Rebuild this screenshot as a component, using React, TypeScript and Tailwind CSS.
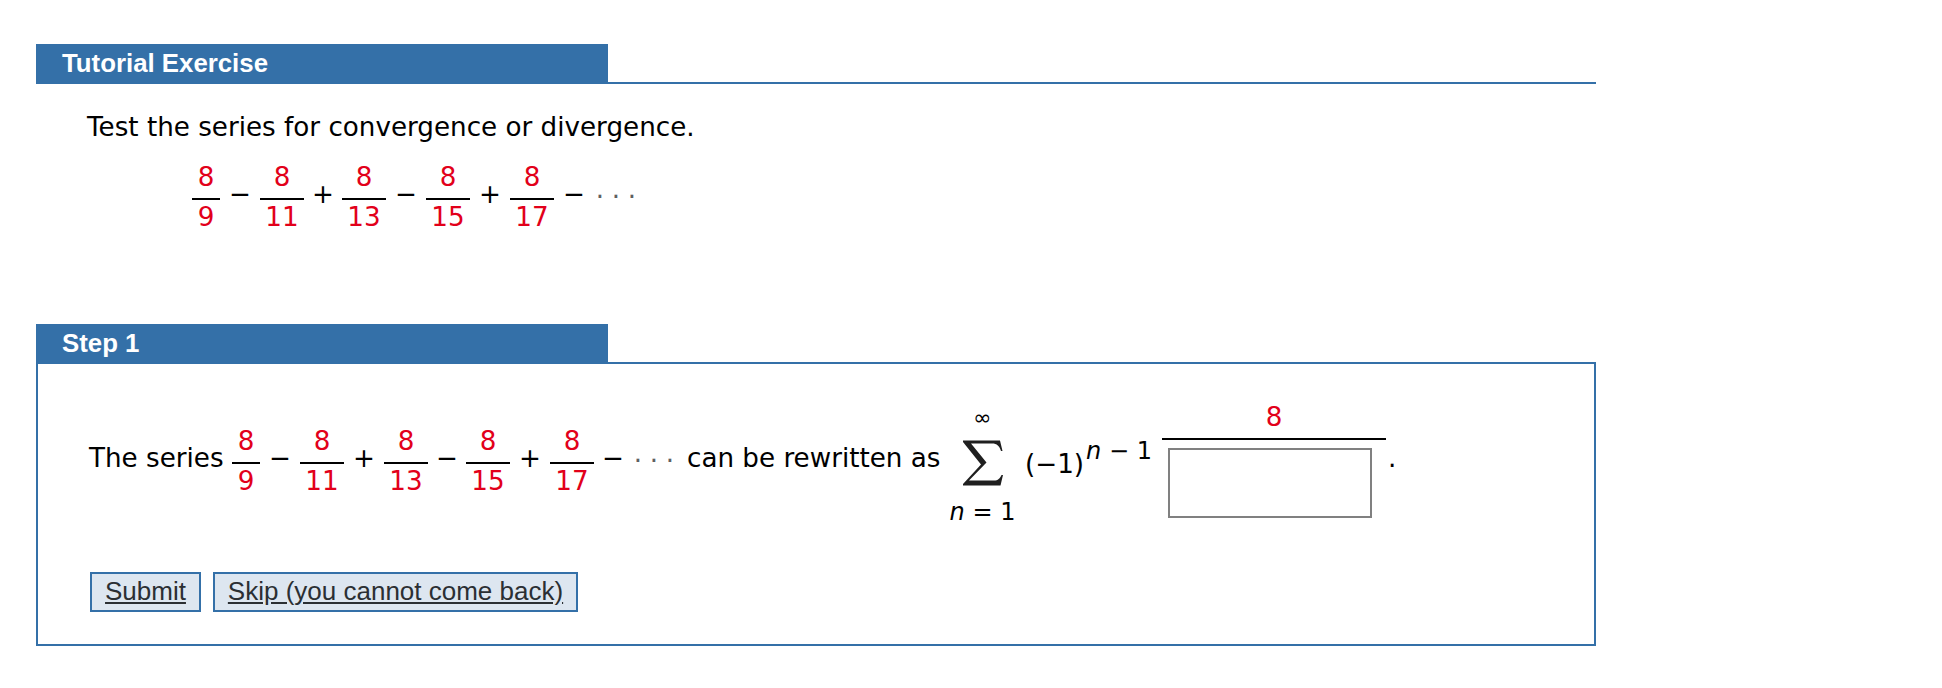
import React from "react";

const Frac = ({ d, w }: { d: string; w: string }) => (
  <div className={`flex flex-col items-center ${w}`}>
    <div className="h-[30px] leading-[30px] text-[#e2001a]">8</div>
    <div className="mt-[6px] h-[2px] w-full bg-black" />
    <div className="mt-[2px] h-[30px] leading-[30px] text-[#e2001a]">{d}</div>
  </div>
);

const Op = ({ c, w }: { c: string; w: string }) => (
  <div className={`mt-[17px] h-[30px] text-center leading-[30px] ${w}`}>{c}</div>
);

const Dots = () => (
  <div className="-ml-[2px] mt-[20px] flex w-[57px] leading-[30px] text-[#606060]">
    <span className="w-[16px] text-center">·</span>
    <span className="w-[16px] text-center">·</span>
    <span className="w-[16px] text-center">·</span>
  </div>
);

export default function App() {
  return (
    <div
      className="h-[688px] w-[1596px] bg-white pl-[36px] pt-[44px] text-[26.2px] text-black"
      style={{ fontFamily: '"DejaVu Sans", sans-serif' }}
    >
      <div className="h-[40px] border-b-2 border-[#3470a8]">
        <div
          className="h-[40px] w-[572px] bg-[#3470a8] pl-[26px] text-[25.8px] font-bold leading-[39px] text-white"
          style={{ fontFamily: '"Liberation Sans", sans-serif' }}
        >
          Tutorial Exercise
        </div>
      </div>

      <div className="ml-[51px] mt-[28px] h-[30px] leading-[30px]">Test the series for convergence or divergence.</div>

      <div className="ml-[156px] mt-[20px] flex h-[70px] items-start">
        <Frac d="9" w="w-[28px]" />
        <Op c="−" w="w-[40px]" />
        <Frac d="11" w="w-[44px]" />
        <Op c="+" w="w-[38px]" />
        <Frac d="13" w="w-[44px]" />
        <Op c="−" w="w-[40px]" />
        <Frac d="15" w="w-[44px]" />
        <Op c="+" w="w-[40px]" />
        <Frac d="17" w="w-[44px]" />
        <Op c="−" w="w-[40px]" />
        <Dots />
      </div>

      <div className="mt-[92px]">
        <div
          className="relative z-10 h-[40px] w-[572px] bg-[#3470a8] pl-[26px] text-[25.8px] font-bold leading-[39px] text-white"
          style={{ fontFamily: '"Liberation Sans", sans-serif' }}
        >
          Step 1
        </div>
        <div className="-mt-[2px] h-[284px] border-2 border-[#3470a8] pl-[51px] pt-[36px]">
          <div className="flex h-[130px] items-start">
            <div className="mt-[43px] w-[143px] whitespace-nowrap leading-[30px]">The series</div>
            <div className="mt-[26px] flex h-[70px] items-start">
              <Frac d="9" w="w-[28px]" />
              <Op c="−" w="w-[40px]" />
              <Frac d="11" w="w-[44px]" />
              <Op c="+" w="w-[40px]" />
              <Frac d="13" w="w-[44px]" />
              <Op c="−" w="w-[38px]" />
              <Frac d="15" w="w-[44px]" />
              <Op c="+" w="w-[40px]" />
              <Frac d="17" w="w-[44px]" />
              <Op c="−" w="w-[38px]" />
              <Dots />
            </div>
            <div className="mt-[43px] w-[263px] whitespace-nowrap leading-[30px]">can be rewritten as</div>
            <div className="mt-[3px] flex w-[65px] flex-col items-center">
              <div className="h-[30px] text-[22px] leading-[30px]">∞</div>
              <svg className="mt-[7px] h-[46px] w-[42px]" viewBox="0 0 42 46" aria-hidden="true">
                <path
                  d="M1 0.5H38L40.5 11H39C37.5 6 35 3.5 30 3.5H9L24.5 22.5L7 40.5H32C36 40.5 38 38.5 39.5 35H41L38.5 45.5H1V44L19 24.5L1 2Z"
                  fill="#1f1f1f"
                />
              </svg>
              <div className="mt-[11px] h-[30px] whitespace-nowrap text-[24px] leading-[30px]">
                <i>n</i> = 1
              </div>
            </div>
            <div className="flex w-[147px] items-start whitespace-nowrap pl-[10px]">
              <div className="mt-[49px] leading-[30px]">(−1)</div>
              <div className="ml-[2px] mt-[36px] text-[24px] leading-[30px]">
                <i>n</i> − 1
              </div>
            </div>
            <div className="mt-[2px] flex w-[224px] flex-col">
              <div className="h-[30px] text-center leading-[30px] text-[#e2001a]">8</div>
              <div className="mt-[6px] h-[2px] w-full bg-black" />
              <input
                type="text"
                aria-label="answer"
                className="ml-[6px] mt-[8px] h-[70px] w-[204px] border-2 border-[#808080] bg-white"
              />
            </div>
            <div className="ml-[2px] mt-[43px] leading-[30px]">.</div>
          </div>
          <div
            className="ml-[1px] mt-[42px] flex gap-[12px] text-[26px] text-[#2b2f33]"
            style={{ fontFamily: '"Liberation Sans", sans-serif' }}
          >
            <button className="h-[40px] w-[111px] border-2 border-[#3470a8] bg-[#dde6f0] pb-[2px] leading-[32px] underline">
              Submit
            </button>
            <button className="h-[40px] w-[365px] border-2 border-[#3470a8] bg-[#dde6f0] pb-[2px] leading-[32px] underline">
              Skip (you cannot come back)
            </button>
          </div>
        </div>
      </div>
    </div>
  );
}
